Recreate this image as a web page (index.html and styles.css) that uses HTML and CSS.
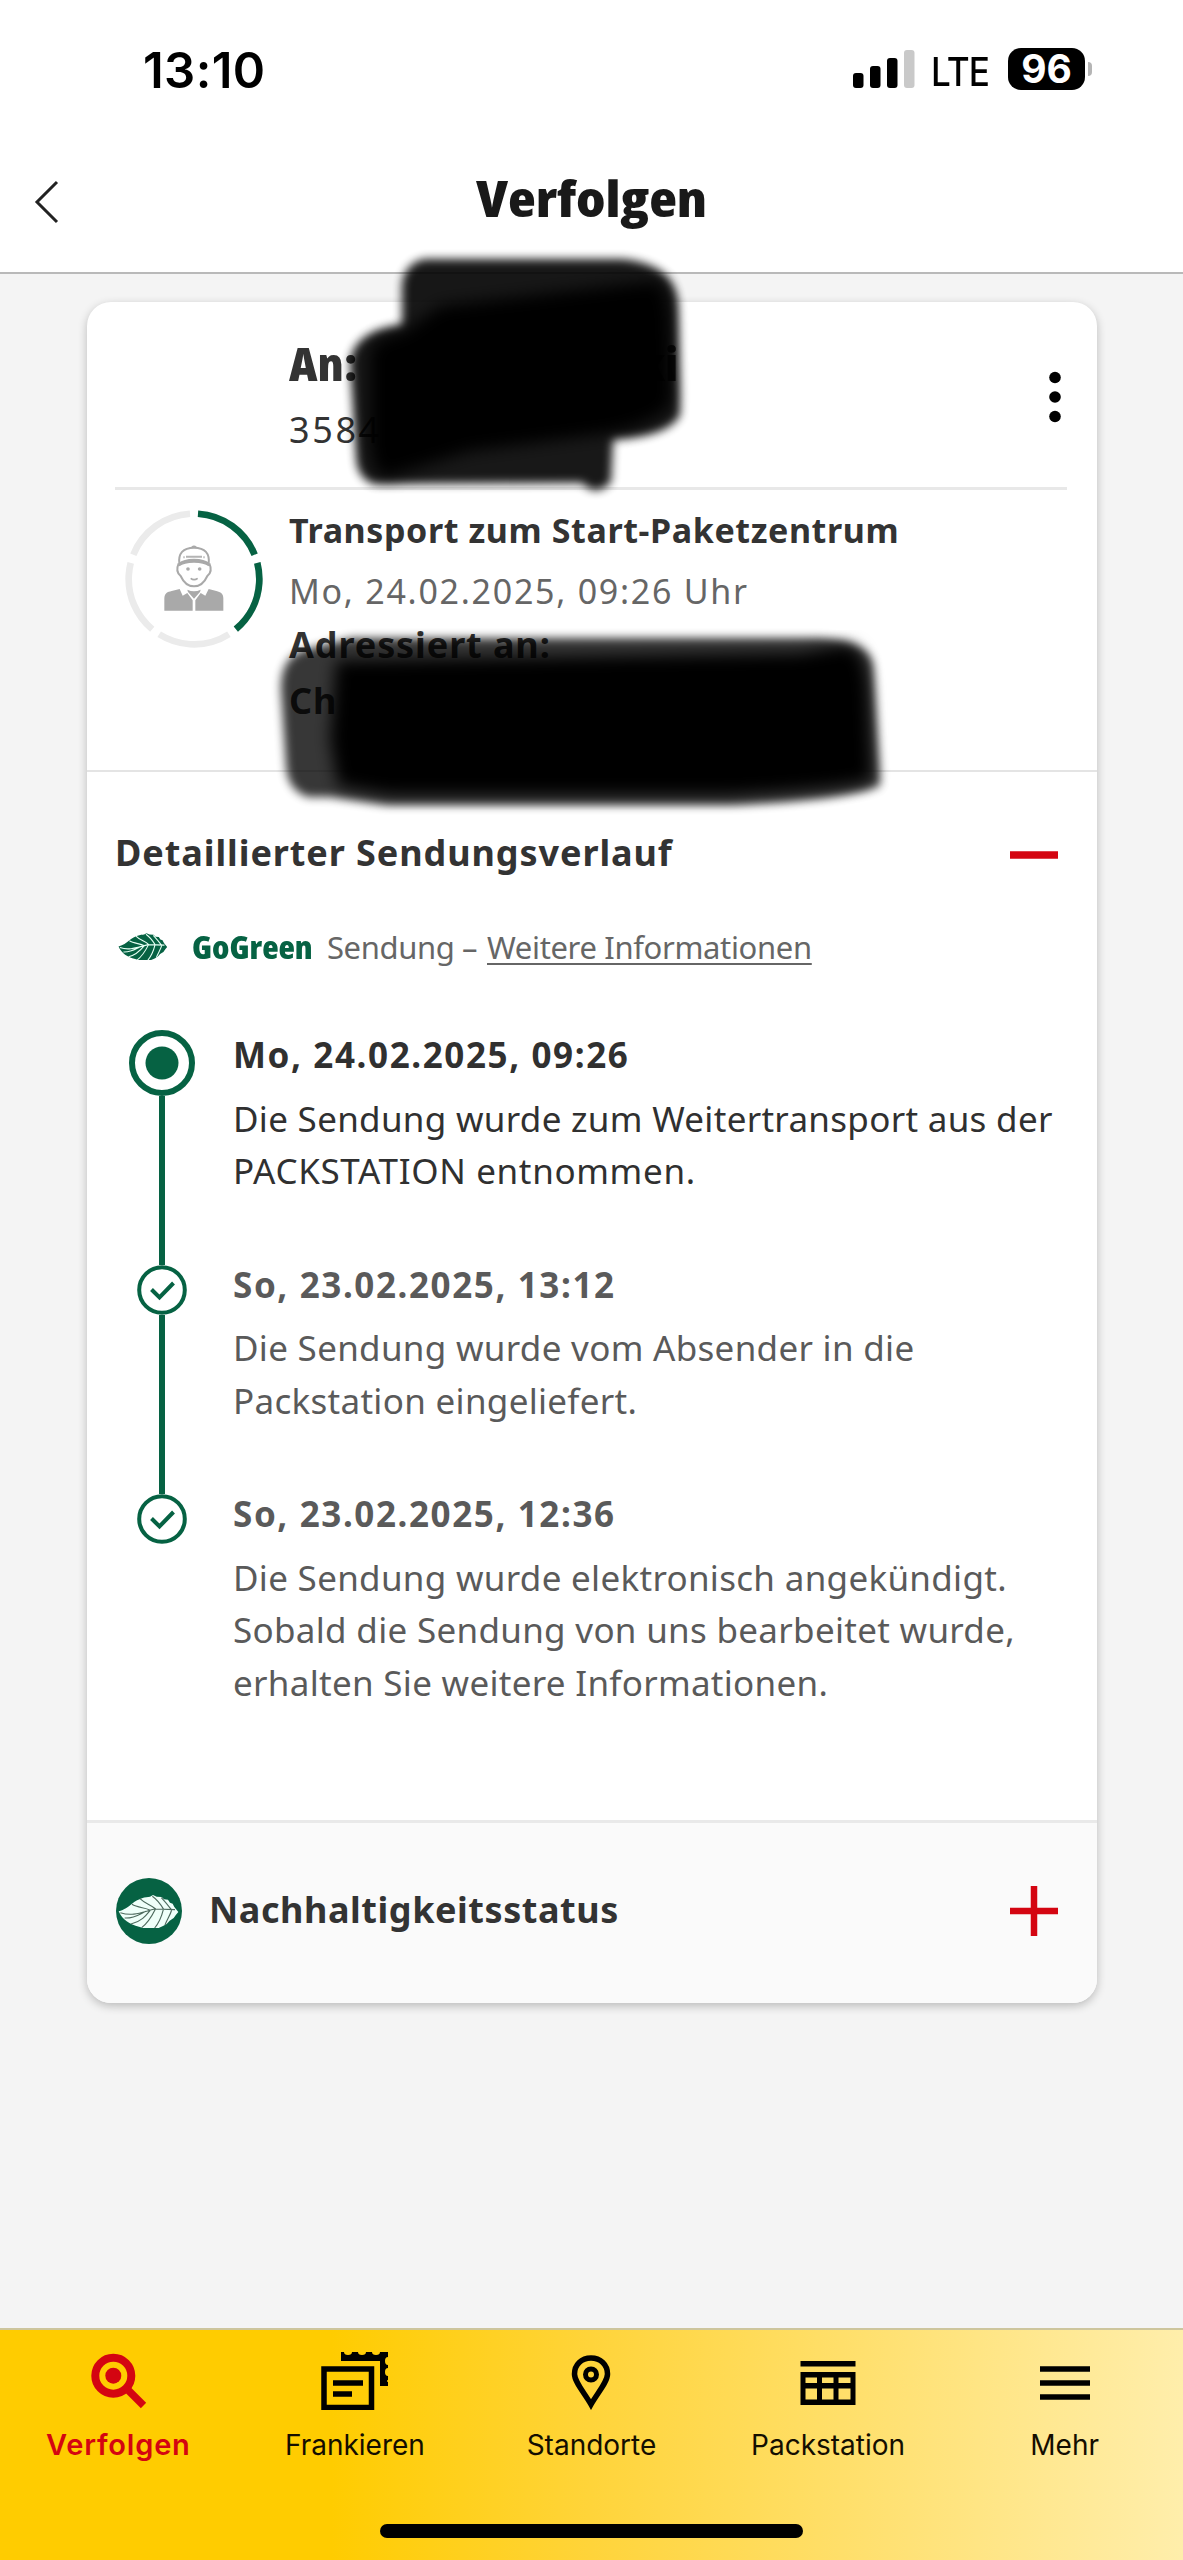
FILE: index.html
```
<!DOCTYPE html>
<html lang="de">
<head>
<meta charset="utf-8">
<title>Verfolgen</title>
<link rel="stylesheet" href="styles.css">
</head>
<body>
<svg class="defs" width="0" height="0" aria-hidden="true">
  <symbol id="leaf" viewBox="55 100 184 106">
    <path class="leaf-body" d="M57 153C75 147 84 141 97 130C118 113 138 110 151 109L160 104L171 109L186 110L193 117L205 118L211 127L219 130L224 140L236 155L229 163L222 173L210 181L201 191L190 197L177 203L130 203L118 199C90 193 68 178 57 153Z"/>
    <path class="leaf-vein" d="M62 157C100 170 130 154 166 146L226 148M97 132C112 142 136 142 150 149M121 115C138 132 154 132 168 146M158 108C175 120 184 134 192 147M185 112C196 124 206 136 215 148M75 173C104 175 122 160 139 153M94 191C124 184 139 166 151 151M126 202C145 188 158 165 167 147M165 203C176 190 186 168 191 148M196 194C202 178 212 164 216 149"/>
  </symbol>
  <symbol id="check" viewBox="0 0 50 50">
    <circle cx="25" cy="25" r="22.8" fill="#fff" stroke="#066243" stroke-width="4"/>
    <path d="M14.5 24.5l8 8L36.5 18" fill="none" stroke="#066243" stroke-width="4"/>
  </symbol>
</svg>

<div class="screen">
  <div class="statusbar">
    <span class="clock">13:10</span>
    <div class="indicators">
      <svg class="signal" width="62" height="40" viewBox="0 0 62 40">
        <rect x="0" y="24" width="10.5" height="15" rx="3"/>
        <rect x="17" y="17" width="10.5" height="22" rx="3"/>
        <rect x="34" y="9" width="10.5" height="30" rx="3"/>
        <rect x="51" y="1" width="10.5" height="38" rx="3" fill="#c9c9c9"/>
      </svg>
      <span class="network">LTE</span>
      <span class="battery">96</span>
      <span class="battery-tip"></span>
    </div>
  </div>

  <header class="titlebar">
    <svg class="back" width="28" height="44" viewBox="0 0 28 44"><path d="M24 2L4 22L24 42" fill="none" stroke="#222" stroke-width="3"/></svg>
    <h1>Verfolgen</h1>
  </header>

  <main class="content">
    <article class="card">
      <section class="recipient">
        <div>
          <div class="recipient-name"><span>An:</span><span>ki</span></div>
          <div class="tracking-no">3584</div>
        </div>
        <svg class="more" width="14" height="52" viewBox="0 0 14 52"><circle cx="7" cy="6.5" r="5.8"/><circle cx="7" cy="26" r="5.8"/><circle cx="7" cy="45.5" r="5.8"/></svg>
      </section>

      <section class="status">
        <svg class="progress" width="138" height="138" viewBox="75 60 414 414">
          <g fill="none" stroke-width="20" transform="rotate(-86.5 282 267)">
            <circle cx="282" cy="267" r="196" stroke="#ebebeb" pathLength="360" stroke-dasharray="64.5 7.5"/>
            <circle cx="282" cy="267" r="196" stroke="#066243" pathLength="360" stroke-dasharray="64.5 7.5 64.5 223.5"/>
          </g>
          <g fill="#a9a9a9">
            <path d="M193 362V325C194 309 202 306 215 303L239 297L248 317L262 309L278 331V362ZM286 362V331L302 309L316 317L326 297L349 303C362 306 370 311 370 325V362ZM262 299Q282 309 302 299L300 306L282 326L264 306Z"/>
            <path d="M274 170Q282 163 290 170L289 175H275Z"/>
          </g>
          <path d="M238 222C234 190 249 173 282 173C315 173 330 190 326 222C309 205 255 205 238 222Z" fill="#fff" stroke="#a9a9a9" stroke-width="6"/>
          <path d="M236 220C228 238 232 250 242 258C251 278 266 289 282 289C298 289 313 278 322 258C332 250 336 238 328 220" fill="none" stroke="#a9a9a9" stroke-width="6"/>
          <path d="M236 226C255 210 309 210 328 226" fill="none" stroke="#a9a9a9" stroke-width="8"/>
          <path d="M250 202h4M258 200h48M310 202h4" fill="none" stroke="#b4b4b4" stroke-width="6"/>
          <circle cx="264" cy="237" r="5.5" fill="#a9a9a9"/><circle cx="299" cy="237" r="5.5" fill="#a9a9a9"/>
          <path d="M272 265Q282 273 293 265" fill="none" stroke="#a9a9a9" stroke-width="5"/>
        </svg>
        <div>
          <h2>Transport zum Start-Paketzentrum</h2>
          <p class="status-time">Mo, 24.02.2025, 09:26 Uhr</p>
          <p class="addressee">Adressiert an:<br>Ch</p>
        </div>
      </section>

      <section class="history">
        <div class="section-head">
          <h2>Detaillierter Sendungsverlauf</h2>
          <svg width="48" height="48" viewBox="0 0 48 48"><path d="M0 24H48" stroke="#d40511" stroke-width="7.5"/></svg>
        </div>
        <div class="gogreen">
          <svg class="leaf-green" width="50" height="29"><use href="#leaf"/></svg>
          <strong>GoGreen</strong>
          <span class="shipment">Sendung</span>
          <span class="dash">–</span>
          <a>Weitere Informationen</a>
        </div>
        <ol class="timeline">
          <li class="event current">
            <div class="marker">
              <svg width="66" height="66" viewBox="0 0 66 66"><circle cx="33" cy="33" r="30" fill="none" stroke="#066243" stroke-width="6"/><circle cx="33" cy="33" r="16.5" fill="#066243"/></svg>
              <i></i>
            </div>
            <div><h3>Mo, 24.02.2025, 09:26</h3><p>Die Sendung wurde zum Weitertransport aus der<br><span class="caps">PACKSTATION entnommen.</span></p></div>
          </li>
          <li class="event">
            <div class="marker"><svg width="50" height="50"><use href="#check"/></svg><i></i></div>
            <div><h3>So, 23.02.2025, 13:12</h3><p>Die Sendung wurde vom Absender in die<br>Packstation eingeliefert.</p></div>
          </li>
          <li class="event">
            <div class="marker"><svg width="50" height="50"><use href="#check"/></svg></div>
            <div><h3>So, 23.02.2025, 12:36</h3><p>Die Sendung wurde elektronisch angekündigt.<br>Sobald die Sendung von uns bearbeitet wurde,<br>erhalten Sie weitere Informationen.</p></div>
          </li>
        </ol>
      </section>

      <section class="sustainability">
        <svg width="66" height="66" viewBox="49 53 198 198"><circle cx="148" cy="152" r="99" fill="#066243"/><use class="leaf-white" href="#leaf" x="55" y="100" width="184" height="106"/></svg>
        <h2>Nachhaltigkeitsstatus</h2>
        <svg width="48" height="50" viewBox="0 0 48 50"><path d="M0 25H48M24 0V50" stroke="#d40511" stroke-width="6.5"/></svg>
      </section>
    </article>
  </main>

  <nav class="tabs">
    <a class="tab active">
      <svg width="60" height="60" viewBox="88 2350 60 60"><circle cx="113.3" cy="2375.7" r="18" fill="none" stroke="#d40511" stroke-width="8"/><circle cx="113.3" cy="2375.7" r="8" fill="#d40511"/><path d="M127 2389L143.5 2405.5" stroke="#d40511" stroke-width="7.5"/></svg>
      <span>Verfolgen</span>
    </a>
    <a class="tab">
      <svg width="68" height="60" viewBox="320 2350 68 60"><path d="M323 2369H370.5V2407.5H323Z" fill="none" stroke="#000" stroke-width="5.5"/><path d="M332 2383H362M332 2394H351" stroke="#000" stroke-width="5.5"/><path d="M340 2352h3a4 3 0 0 0 8 0h6a4 3 0 0 0 8 0h6a4 3 0 0 0 8 0h8v5a3 4 0 0 0 0 8v3a3 4 0 0 0 0 8v4a1 1 0 0 0 0 2v4h-8v-25h-39z"/></svg>
      <span>Frankieren</span>
    </a>
    <a class="tab">
      <svg width="60" height="60" viewBox="560.5 2350 60 60"><path d="M590.5 2404.5C584 2393 574 2382 574 2374C574 2364.5 581 2358 590.5 2358S607 2364.5 607 2374C607 2382 597 2393 590.5 2404.5Z" fill="none" stroke="#000" stroke-width="5.5"/><circle cx="590.5" cy="2374.5" r="5.5" fill="none" stroke="#000" stroke-width="5"/></svg>
      <span>Standorte</span>
    </a>
    <a class="tab">
      <svg width="60" height="60" viewBox="797.5 2350 60 60"><path fill-rule="evenodd" d="M800 2361H855V2366.5H800ZM800 2372H855V2405H800ZM805 2377.5V2383H816.5V2377.5ZM821.5 2377.5V2383H833V2377.5ZM838 2377.5V2383H850V2377.5ZM805 2388.5V2399.5H816.5V2388.5ZM821.5 2388.5V2399.5H833V2388.5ZM838 2388.5V2399.5H850V2388.5Z"/></svg>
      <span>Packstation</span>
    </a>
    <a class="tab">
      <svg width="60" height="60" viewBox="1034 2350 60 60"><path d="M1039 2369H1089M1039 2383H1089M1039 2397H1089" stroke="#000" stroke-width="5.5"/></svg>
      <span>Mehr</span>
    </a>
    <div class="home-indicator"></div>
  </nav>
</div>

<svg class="redaction" width="1183" height="860" viewBox="0 0 1183 860" aria-hidden="true">
  <defs>
    <filter id="soft" x="-10%" y="-10%" width="120%" height="120%"><feGaussianBlur stdDeviation="5"/></filter>
    <filter id="softer" x="-10%" y="-10%" width="120%" height="120%"><feGaussianBlur stdDeviation="8"/></filter>
  </defs>
  <path filter="url(#soft)" opacity=".9" d="M424 259H622Q676 264 678 305L680 415Q668 437 613 439L611 482Q596 498 582 483L374 484Q356 478 356 455L350 362Q353 331 402 325V285Q404 264 424 259Z"/>
  <path filter="url(#softer)" d="M440 306L656 281Q668 287 670 323L672 402Q664 421 610 433L470 451L384 478Q370 468 370 440V352Q374 338 404 332Z"/>
  <path filter="url(#soft)" opacity=".78" d="M304 650L352 638H815Q872 640 873 668L880 785Q850 800 730 805H387L330 797H308Q287 790 286 765L281 690Q280 658 304 650Z"/>
  <path filter="url(#softer)" d="M336 660L800 653L845 645Q866 647 868 690L872 780Q850 788 730 795H390L338 786L330 740Z"/>
</svg>
</body>
</html>
```
FILE: styles.css
```
* { box-sizing: border-box; }

body {
  margin: 0;
  background: #fff;
  font-family: "Noto Sans", "Open Sans", sans-serif;
  color: #333;
}

h1, h2, h3, p, ol { margin: 0; padding: 0; font-weight: 400; }
svg { display: block; flex: none; }
.defs { position: absolute; }

.screen {
  width: 1183px;
  height: 2560px;
  display: flex;
  flex-direction: column;
  background: #f4f4f4;
}

/* Status bar */
.statusbar {
  flex: none;
  height: 140px;
  padding: 40px 91px 0 143px;
  display: flex;
  justify-content: space-between;
  align-items: flex-start;
  background: #fff;
  color: #000;
  font-family: Inter, sans-serif;
}
.clock { font-size: 49px; font-weight: 600; line-height: 62px; letter-spacing: .4px; }
.indicators { display: flex; align-items: flex-start; padding-top: 8px; }
.signal { margin-top: 1px; }
.network {
  width: 56px;
  margin-left: 16px;
  margin-right: 2px;
  font-size: 39px;
  font-weight: 500;
  line-height: 48px;
  letter-spacing: -1px;
  transform: scaleX(.9);
  transform-origin: left;
}
.battery {
  width: 77px;
  height: 42px;
  margin-left: 19px;
  border-radius: 13px;
  background: #000;
  color: #fff;
  font-size: 39px;
  font-weight: 700;
  line-height: 42px;
  text-align: center;
}
.battery-tip { width: 4px; height: 14px; margin: 14px 0 0 3px; border-radius: 0 5px 5px 0; background: #b5b5b5; }

/* Title bar */
.titlebar {
  flex: none;
  height: 134px;
  display: grid;
  grid-template-columns: 93px 1fr 93px;
  background: #fff;
  border-bottom: 2px solid #b9b9b9;
}
.back { margin: 40px 0 0 33px; }
h1 {
  margin-top: 28px;
  font-family: "Open Sans", sans-serif;
  font-size: 49px;
  font-weight: 800;
  font-stretch: 75%;
  line-height: 60px;
  text-align: center;
  color: #191919;
  transform: scaleX(1.17);
}

/* Shipment card */
.content { flex: 1; padding: 28px 86px 0 87px; }
.card {
  height: 1701px;
  display: flex;
  flex-direction: column;
  border-radius: 24px;
  overflow: hidden;
  background: #fff;
  box-shadow: 0 3px 10px rgba(0, 0, 0, .24);
}
h2 { font-size: 36px; font-weight: 700; line-height: 60px; letter-spacing: .98px; white-space: nowrap; }

.recipient {
  height: 188px;
  margin: 0 30px 0 28px;
  padding: 36px 5px 0 174px;
  display: flex;
  justify-content: space-between;
  border-bottom: 3px solid #e8e8e8;
}
.recipient-name {
  display: flex;
  font-family: "Open Sans", sans-serif;
  font-size: 46px;
  font-weight: 800;
  font-stretch: 75%;
  line-height: 50px;
}
.recipient-name span { transform: scaleX(1.08); transform-origin: left; }
.recipient-name span + span { margin-left: 286px; }
.tracking-no { margin-top: 17px; font-size: 36px; line-height: 50px; letter-spacing: 2.6px; }
.more { margin-top: 33px; }

.status { height: 282px; padding: 15px 0 0 38px; display: flex; border-bottom: 2px solid #e4e4e4; }
.progress { margin: 5px 26px 0 0; }
.status h2 { font-size: 34px; line-height: 50px; letter-spacing: .6px; }
.status-time { margin-top: 11px; font-size: 34px; line-height: 50px; letter-spacing: 1.72px; color: #666; }
.addressee { margin-top: 1px; font-size: 36px; font-weight: 700; line-height: 56px; letter-spacing: .9px; }

.history { padding: 51px 39px 0 28px; }
.section-head { display: flex; justify-content: space-between; align-items: center; }
.section-head h2 { letter-spacing: .92px; }
.section-head svg { margin-top: 4px; }

.gogreen {
  margin-top: 42px;
  padding-left: 3px;
  display: flex;
  font-size: 31px;
  line-height: 44px;
  white-space: nowrap;
  color: #666;
}
.leaf-green { margin: 7px 24px 0 0; fill: #066243; stroke: #e6fff4; stroke-width: 4; }
.leaf-white { fill: #effff9; stroke: #4d6a5d; stroke-width: 3.4; }
.leaf-body { stroke: none; }
.leaf-vein { fill: none; }
.gogreen strong {
  width: 135px;
  font-family: "Open Sans", sans-serif;
  font-weight: 800;
  font-stretch: 75%;
  color: #066243;
  transform: scaleX(1.09);
  transform-origin: left;
}
.shipment { width: 135px; letter-spacing: -.4px; }
.dash { width: 25px; }
.gogreen a { letter-spacing: -.35px; text-decoration: underline; text-decoration-thickness: 2px; text-underline-offset: 4px; text-decoration-skip-ink: none; }

/* Timeline */
.timeline { margin-top: 61px; list-style: none; color: #5a5a5a; }
.event { display: flex; min-height: 229.5px; white-space: nowrap; }
.event.current { color: #303030; }
.marker { width: 98px; margin-left: -2px; padding-top: 5px; display: flex; flex-direction: column; align-items: center; flex: none; }
.current .marker { padding-top: 0; }
.marker i { flex: 1; width: 6px; margin-bottom: -5px; background: #066243; }
.event > div + div { margin-left: 22px; }
.event h3 { font-size: 35px; font-weight: 700; line-height: 50px; letter-spacing: 1.6px; }
.event p { margin-top: 12.5px; font-size: 35px; line-height: 52.5px; letter-spacing: .3px; }
.event p .caps { letter-spacing: .65px; }

/* Sustainability row */
.sustainability {
  height: 183px;
  margin-top: auto;
  padding: 0 39px 5px 29px;
  display: flex;
  align-items: center;
  background: #fafafa;
  border-top: 3px solid #e9e9e9;
}
.sustainability h2 { margin: 0 auto 2px 27px; letter-spacing: .55px; }

/* Tab bar */
.tabs {
  position: relative;
  flex: none;
  height: 232px;
  padding-top: 20px;
  display: grid;
  grid-template-columns: repeat(5, 1fr);
  border-top: 2px solid #cdc59c;
  background: linear-gradient(90deg, #fc0 0, #fc0 28%, #ffd43a 50%, #ffeeab 100%);
  font-family: Inter, sans-serif;
}
.tab { display: flex; flex-direction: column; align-items: center; font-size: 28px; line-height: 40px; color: #140e00; }
.tab span { margin-top: 15px; }
.tab.active { font-size: 29px; font-weight: 600; letter-spacing: .8px; color: #d40511; }
.home-indicator { position: absolute; left: 380px; bottom: 22px; width: 423px; height: 14px; border-radius: 7px; background: #000; }

/* Pen marks covering the private details */
.redaction { position: absolute; left: 0; top: 0; pointer-events: none; }
```
